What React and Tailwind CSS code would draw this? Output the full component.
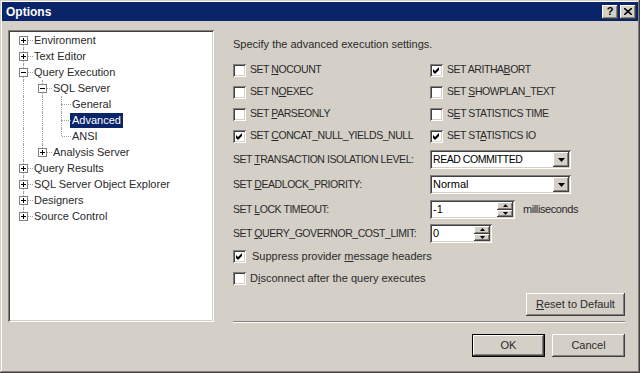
import React from 'react';

const raised = 'shadow-[inset_-1px_-1px_0_#404040,inset_1px_1px_0_#ffffff,inset_-2px_-2px_0_#808080,inset_2px_2px_0_#d4d0c8]';
const sunken = 'shadow-[inset_1px_1px_0_#808080,inset_-1px_-1px_0_#ffffff,inset_2px_2px_0_#404040,inset_-2px_-2px_0_#d4d0c8]';
const caps = 'text-[10.5px] tracking-[-0.45px]';

// guides: per column 'pass' (full vertical), own column: top/bottom halves
const rows = [
  { label: 'Environment', level: 0, box: '+', top: false, bottom: true, pass: [] },
  { label: 'Text Editor', level: 0, box: '+', top: true, bottom: true, pass: [] },
  { label: 'Query Execution', level: 0, box: '-', top: true, bottom: true, pass: [] },
  { label: 'SQL Server', level: 1, box: '-', top: true, bottom: true, pass: [true] },
  { label: 'General', level: 2, box: null, top: true, bottom: true, pass: [true, true] },
  { label: 'Advanced', level: 2, box: null, top: true, bottom: true, pass: [true, true], selected: true },
  { label: 'ANSI', level: 2, box: null, top: true, bottom: false, pass: [true, true] },
  { label: 'Analysis Server', level: 1, box: '+', top: true, bottom: false, pass: [true] },
  { label: 'Query Results', level: 0, box: '+', top: true, bottom: true, pass: [] },
  { label: 'SQL Server Object Explorer', level: 0, box: '+', top: true, bottom: true, pass: [] },
  { label: 'Designers', level: 0, box: '+', top: true, bottom: true, pass: [] },
  { label: 'Source Control', level: 0, box: '+', top: true, bottom: false, pass: [] },
];

const TreeRow = ({ row }) => (
  <div className="flex h-[16px] items-center">
    {row.pass.map((p, i) => (
      <div key={i} className="relative w-[19px] h-full shrink-0">
        {p && <div className="absolute left-[9px] top-0 h-full border-l border-dotted border-[#a0a0a0]" />}
      </div>
    ))}
    <div className="relative w-[19px] h-full shrink-0">
      {row.top && <div className="absolute left-[9px] top-0 h-[8px] border-l border-dotted border-[#a0a0a0]" />}
      {row.bottom && <div className="absolute left-[9px] top-[8px] h-[8px] border-l border-dotted border-[#a0a0a0]" />}
      <div className="absolute left-[10px] top-[8px] w-[9px] border-t border-dotted border-[#a0a0a0]" />
      {row.box && (
        <div className="absolute left-[5px] top-[4px] w-[9px] h-[9px] bg-white border border-[#808080]">
          <div className="absolute left-[1px] top-[3px] w-[5px] h-px bg-black" />
          {row.box === '+' && <div className="absolute left-[3px] top-[1px] w-px h-[5px] bg-black" />}
        </div>
      )}
    </div>
    <span className={`ml-[-1px] px-[2px] h-[15px] leading-[15px] whitespace-nowrap ${row.selected ? 'bg-[#0a246a] text-white' : 'text-[#2a2a2a]'}`}>
      {row.label}
    </span>
  </div>
);

const Check = ({ checked }) => (
  <div className={`w-[13px] h-[13px] bg-white shrink-0 flex items-center justify-center ${sunken}`}>
    {checked && (
      <svg width="7" height="7" viewBox="0 0 7 7">
        <path d="M0 2 L2 4 L6 0 L6 3 L2 7 L0 5 Z" fill="#000" />
      </svg>
    )}
  </div>
);

const CheckItem = ({ checked, children, gap = 'gap-[4px]', cls = '' }) => (
  <div className={`flex items-center h-[22px] ${gap}`}>
    <Check checked={checked} />
    <span className={`whitespace-nowrap ${cls}`}>{children}</span>
  </div>
);

const Combo = ({ value }) => (
  <div className={`w-[141px] h-[19px] bg-white flex items-center pl-[3px] pr-[2px] ${sunken}`}>
    <span className={`flex-1 text-black ${value === 'Normal' ? '' : caps}`}>{value}</span>
    <div className={`w-[16px] h-[15px] bg-[#d4d0c8] flex items-center justify-center ${raised}`}>
      <svg width="7" height="4" viewBox="0 0 7 4">
        <path d="M0 0 H7 L3.5 4 Z" fill="#000" />
      </svg>
    </div>
  </div>
);

const Spin = ({ value, width }) => (
  <div className={`${width} h-[19px] bg-white flex items-center pl-[3px] pr-[2px] ${sunken}`}>
    <span className="flex-1 text-black">{value}</span>
    <div className="flex flex-col w-[16px] h-[15px]">
      <div className={`flex-1 bg-[#d4d0c8] flex items-center justify-center ${raised}`}>
        <svg width="5" height="3" viewBox="0 0 5 3"><path d="M2.5 0 L5 3 H0 Z" fill="#000" /></svg>
      </div>
      <div className={`flex-1 bg-[#d4d0c8] flex items-center justify-center ${raised}`}>
        <svg width="5" height="3" viewBox="0 0 5 3"><path d="M0 0 H5 L2.5 3 Z" fill="#000" /></svg>
      </div>
    </div>
  </div>
);

const Field = ({ label, children, h = 'h-[25px]' }) => (
  <div className={`flex items-center ${h}`}>
    <span className={`w-[197px] whitespace-nowrap ${caps}`}>{label}</span>
    {children}
  </div>
);

const Btn = ({ children, w, def }) => (
  <div className={`${w} h-[23px] flex items-center justify-center bg-[#d4d0c8] ${def ? 'border border-black' : ''} ${raised}`}>
    <span>{children}</span>
  </div>
);

export default function App() {
  return (
    <div
      className="w-[640px] h-[373px] bg-[#d4d0c8] p-[2px] flex flex-col text-[11px] text-[#2a2a2a] shadow-[inset_-1px_-1px_0_#404040,inset_1px_1px_0_#d4d0c8,inset_-2px_-2px_0_#808080,inset_2px_2px_0_#ffffff]"
      style={{ fontFamily: '"Liberation Sans", Arial, sans-serif' }}
    >
      {/* title bar */}
      <div className="h-[19px] bg-[#0a246a] flex items-center pl-[4px] pr-[2px]">
        <span className="flex-1 text-white font-bold text-[12px]">Options</span>
        <div className="flex gap-[2px]">
          <div className={`w-[16px] h-[14px] bg-[#d4d0c8] flex items-center justify-center text-black font-bold text-[11px] leading-none ${raised}`}>?</div>
          <div className={`w-[16px] h-[14px] bg-[#d4d0c8] flex items-center justify-center ${raised}`}>
            <svg width="8" height="7" viewBox="0 0 8 7">
              <path d="M0 0 L8 7 M8 0 L0 7" stroke="#000" strokeWidth="1.6" />
            </svg>
          </div>
        </div>
      </div>

      {/* body */}
      <div className="flex pt-[9px] pl-[6px]">
        <div className={`w-[206px] h-[292px] bg-white p-[2px] ${sunken}`}>
          <div className="pl-[4px]">
            {rows.map((r) => <TreeRow key={r.label} row={r} />)}
          </div>
        </div>

        <div className="ml-[19px] w-[392px] flex flex-col">
          <div className="mt-[6px] h-[16px] leading-[16px]">Specify the advanced execution settings.</div>
          <div className="mt-[7px] grid grid-cols-[197px_1fr]">
            <CheckItem cls={caps}>SET <u>N</u>OCOUNT</CheckItem>
            <CheckItem cls={caps} checked>SET ARITHA<u>B</u>ORT</CheckItem>
            <CheckItem cls={caps}>SET N<u>O</u>EXEC</CheckItem>
            <CheckItem cls={caps}>SET <u>S</u>HOWPLAN_TEXT</CheckItem>
            <CheckItem cls={caps}>SET <u>P</u>ARSEONLY</CheckItem>
            <CheckItem cls={caps}>S<u>E</u>T STATISTICS TIME</CheckItem>
            <CheckItem cls={caps} checked>SET <u>C</u>ONCAT_NULL_YIELDS_NULL</CheckItem>
            <CheckItem cls={caps} checked>SET ST<u>A</u>TISTICS IO</CheckItem>
          </div>
          <Field label={<>SET <u>T</u>RANSACTION ISOLATION LEVEL:</>}>
            <Combo value="READ COMMITTED" />
          </Field>
          <Field label={<>SET <u>D</u>EADLOCK_PRIORITY:</>}>
            <Combo value="Normal" />
          </Field>
          <Field label={<>SET <u>L</u>OCK TIMEOUT:</>}>
            <Spin value="-1" width="w-[85px]" />
            <span className="ml-[8px] tracking-[-0.4px]">milliseconds</span>
          </Field>
          <Field h="h-[23px]" label={<>SET <u>Q</u>UERY_GOVERNOR_COST_LIMIT:</>}>
            <Spin value="0" width="w-[62px]" />
          </Field>
          <CheckItem checked gap="gap-[6px]">Suppress provider <u>m</u>essage headers</CheckItem>
          <CheckItem>D<u>i</u>sconnect after the query executes</CheckItem>
          <div className="mt-[4px] flex justify-end">
            <Btn w="w-[99px]"><u>R</u>eset to Default</Btn>
          </div>
          <div className="mt-[5px] h-[2px] border-t border-[#808080] border-b border-b-white" />
          <div className="mt-[11px] flex justify-end gap-[7px]">
            <Btn w="w-[73px]" def>OK</Btn>
            <Btn w="w-[73px]">Cancel</Btn>
          </div>
        </div>
      </div>
    </div>
  );
}
